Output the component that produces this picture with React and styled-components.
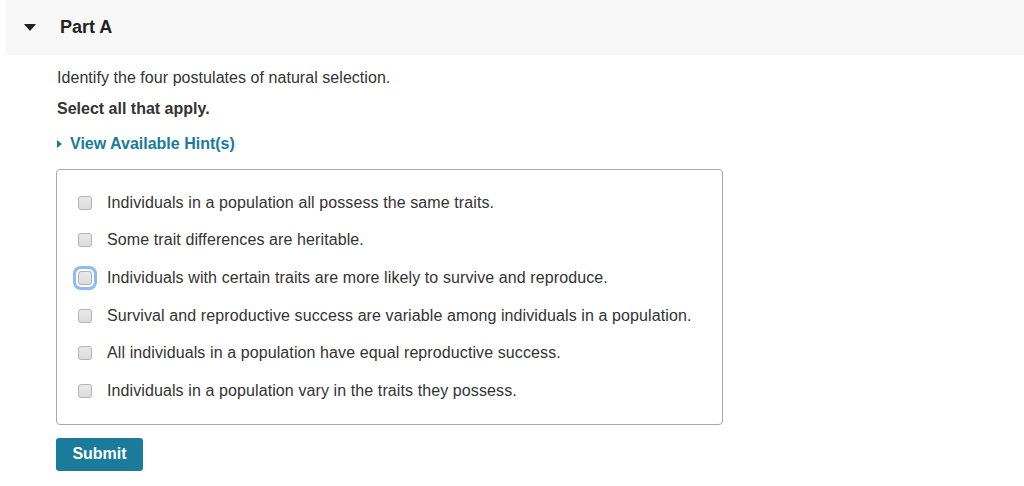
import React from "react";
import styled, { createGlobalStyle } from "styled-components";

const Global = createGlobalStyle`
  html, body { margin: 0; padding: 0; background: #fff; }
  body { font-family: "Liberation Sans", Arial, Helvetica, sans-serif; color: #333; }
`;

const Page = styled.div`
  width: 1024px;
`;

const Header = styled.div`
  margin-left: 6px;
  height: 55px;
  background: #f8f8f8;
  display: flex;
  align-items: center;
  padding-left: 18px;
  box-sizing: border-box;
`;

const Caret = styled.span`
  width: 0;
  height: 0;
  border-left: 6px solid transparent;
  border-right: 6px solid transparent;
  border-top: 7px solid #222;
  margin-right: 24px;
  margin-top: -1px;
`;

const Title = styled.h2`
  margin: 0;
  font-size: 18px;
  font-weight: bold;
  color: #222;
`;

const Content = styled.div`
  padding: 13px 0 0 56px;
  display: flex;
  flex-direction: column;
`;

const Prompt = styled.p`
  margin: 0;
  font-size: 16px;
  line-height: 20px;
  padding-left: 1px;
  letter-spacing: 0.05px;
`;

const Instruction = styled.p`
  margin: 11px 0 0;
  font-size: 16px;
  line-height: 20px;
  font-weight: bold;
  padding-left: 1px;
`;

const HintLink = styled.a`
  margin-top: 15px;
  display: flex;
  align-items: center;
  font-size: 16px;
  line-height: 20px;
  font-weight: bold;
  color: #197b9b;
  text-decoration: none;
  padding-left: 1px;
`;

const HintCaret = styled.span`
  width: 0;
  height: 0;
  border-top: 4px solid transparent;
  border-bottom: 4px solid transparent;
  border-left: 5px solid #197b9b;
  margin-right: 8px;
`;

const OptionBox = styled.div`
  margin-top: 15px;
  width: 667px;
  box-sizing: border-box;
  border: 1px solid #aaa;
  border-radius: 4px;
  padding: 14px 0 14px 21px;
`;

const Option = styled.label`
  display: flex;
  align-items: center;
  height: 37.6px;
  font-size: 16px;
  letter-spacing: 0.1px;
`;

const Box = styled.span`
  width: 14px;
  height: 14px;
  box-sizing: border-box;
  border: 1px solid #b3b3b3;
  border-radius: 3px;
  background: linear-gradient(#e9e9e9, #dcdcdc);
  margin-right: 15px;
  flex: none;
  box-shadow: ${(p) => (p.$focused ? "0 0 0 2px #fff, 0 0 0 5px #8cbcf5" : "none")};
`;

const Submit = styled.button`
  margin-top: 13px;
  width: 87px;
  height: 33px;
  background: #1a7b9b;
  color: #fff;
  border: none;
  border-radius: 3px;
  font-family: "Liberation Sans", Arial, sans-serif;
  font-size: 16px;
  font-weight: bold;
  padding: 0;
  align-self: flex-start;
`;

const options = [
  "Individuals in a population all possess the same traits.",
  "Some trait differences are heritable.",
  "Individuals with certain traits are more likely to survive and reproduce.",
  "Survival and reproductive success are variable among individuals in a population.",
  "All individuals in a population have equal reproductive success.",
  "Individuals in a population vary in the traits they possess.",
];

export default function App() {
  return (
    <Page>
      <Global />
      <Header>
        <Caret />
        <Title>Part A</Title>
      </Header>
      <Content>
        <Prompt>Identify the four postulates of natural selection.</Prompt>
        <Instruction>Select all that apply.</Instruction>
        <HintLink href="#">
          <HintCaret />
          View Available Hint(s)
        </HintLink>
        <OptionBox>
          {options.map((o, i) => (
            <Option key={i}>
              <Box $focused={i === 2} />
              {o}
            </Option>
          ))}
        </OptionBox>
        <Submit>Submit</Submit>
      </Content>
    </Page>
  );
}
